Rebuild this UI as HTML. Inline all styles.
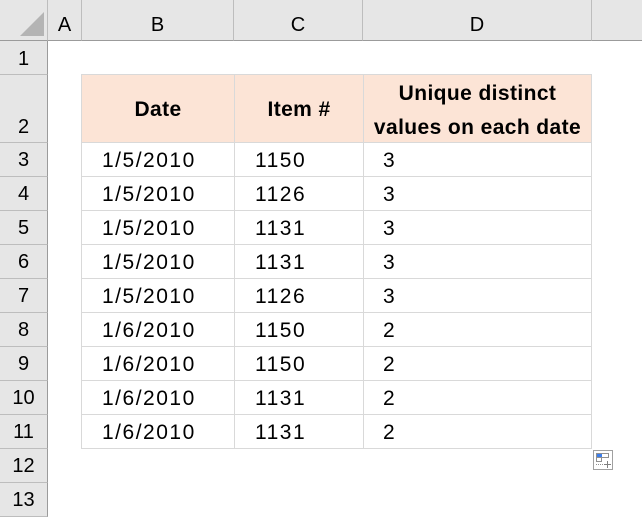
<!DOCTYPE html>
<html><head><style>
body{margin:0;width:642px;height:514px;background:#fff;position:relative;overflow:hidden;font-family:"Liberation Sans",sans-serif;color:#000}
div{position:absolute;box-sizing:border-box}
.ch{top:0;height:41px;background:#e6e6e6;border-right:1px solid #bdbdbd;border-bottom:1px solid #9b9b9b;font-size:20px;text-align:center;line-height:50px}
.rh{left:0;width:48px;background:#e6e6e6;border-bottom:1px solid #bdbdbd;border-right:1px solid #9b9b9b;font-size:20px;text-align:center}
.c{height:35px;border:1px solid #d9d9d9;font-size:21px;line-height:35px;letter-spacing:1.5px}
.h{background:#fce4d6;font-weight:bold;text-align:center;font-size:21px;letter-spacing:0.4px}
</style></head><body>
<div class="ch" style="left:0;width:48px"></div>
<svg style="position:absolute;left:18px;top:12px" width="26" height="26"><polygon points="26,0 26,24 2,24" fill="#b4b4b4"/></svg>
<div class="ch" style="left:48px;width:34px">A</div>
<div class="ch" style="left:82px;width:152px">B</div>
<div class="ch" style="left:234px;width:129px">C</div>
<div class="ch" style="left:363px;width:229px">D</div>
<div class="ch" style="left:592px;width:50px;border-right:none"></div>

<div class="rh" style="top:41px;height:34px;line-height:36px">1</div>
<div class="rh" style="top:75px;height:68px;line-height:104px">2</div>
<div class="rh" style="top:143px;height:34px;line-height:34px">3</div>
<div class="rh" style="top:177px;height:34px;line-height:34px">4</div>
<div class="rh" style="top:211px;height:34px;line-height:34px">5</div>
<div class="rh" style="top:245px;height:34px;line-height:34px">6</div>
<div class="rh" style="top:279px;height:34px;line-height:34px">7</div>
<div class="rh" style="top:313px;height:34px;line-height:34px">8</div>
<div class="rh" style="top:347px;height:34px;line-height:34px">9</div>
<div class="rh" style="top:381px;height:34px;line-height:34px">10</div>
<div class="rh" style="top:415px;height:34px;line-height:34px">11</div>
<div class="rh" style="top:449px;height:34px;line-height:34px">12</div>
<div class="rh" style="top:483px;height:34px;line-height:34px">13</div>

<div class="c h" style="left:81px;top:74px;width:154px;height:69px;line-height:70px">Date</div>
<div class="c h" style="left:234px;top:74px;width:130px;height:69px;line-height:70px">Item #</div>
<div class="c h" style="left:363px;top:74px;width:229px;height:69px;line-height:34px;padding-top:2px">Unique distinct<br>values on each date</div>

<div id="rows"></div>
<script>
var d=[["1/5/2010",1150,3],["1/5/2010",1126,3],["1/5/2010",1131,3],["1/5/2010",1131,3],["1/5/2010",1126,3],["1/6/2010",1150,2],["1/6/2010",1150,2],["1/6/2010",1131,2],["1/6/2010",1131,2]];
var h="";
d.forEach(function(r,i){var t=142+i*34;
h+='<div class="c" style="left:81px;top:'+t+'px;width:154px;padding-left:20px">'+r[0]+'</div>';
h+='<div class="c" style="left:234px;top:'+t+'px;width:130px;padding-left:20px">'+r[1]+'</div>';
h+='<div class="c" style="left:363px;top:'+t+'px;width:229px;padding-left:19px">'+r[2]+'</div>';});
document.getElementById("rows").outerHTML=h;
</script>
<svg style="position:absolute;left:593px;top:450px" width="20" height="20">
<rect x="0.5" y="0.5" width="19" height="19" fill="#fff" stroke="#a0a0a0"/>
<rect x="3" y="3" width="6" height="4" fill="#3d7eea"/>
<rect x="3.5" y="3.5" width="12" height="4" fill="none" stroke="#909090"/>
<rect x="3.5" y="7.5" width="5" height="4" fill="none" stroke="#909090"/>
<path d="M3 14.5h8" stroke="#909090" stroke-dasharray="1,1"/>
<path d="M14.5 11v7M11 14.5h7" stroke="#808080"/>
</svg>
</body></html>
